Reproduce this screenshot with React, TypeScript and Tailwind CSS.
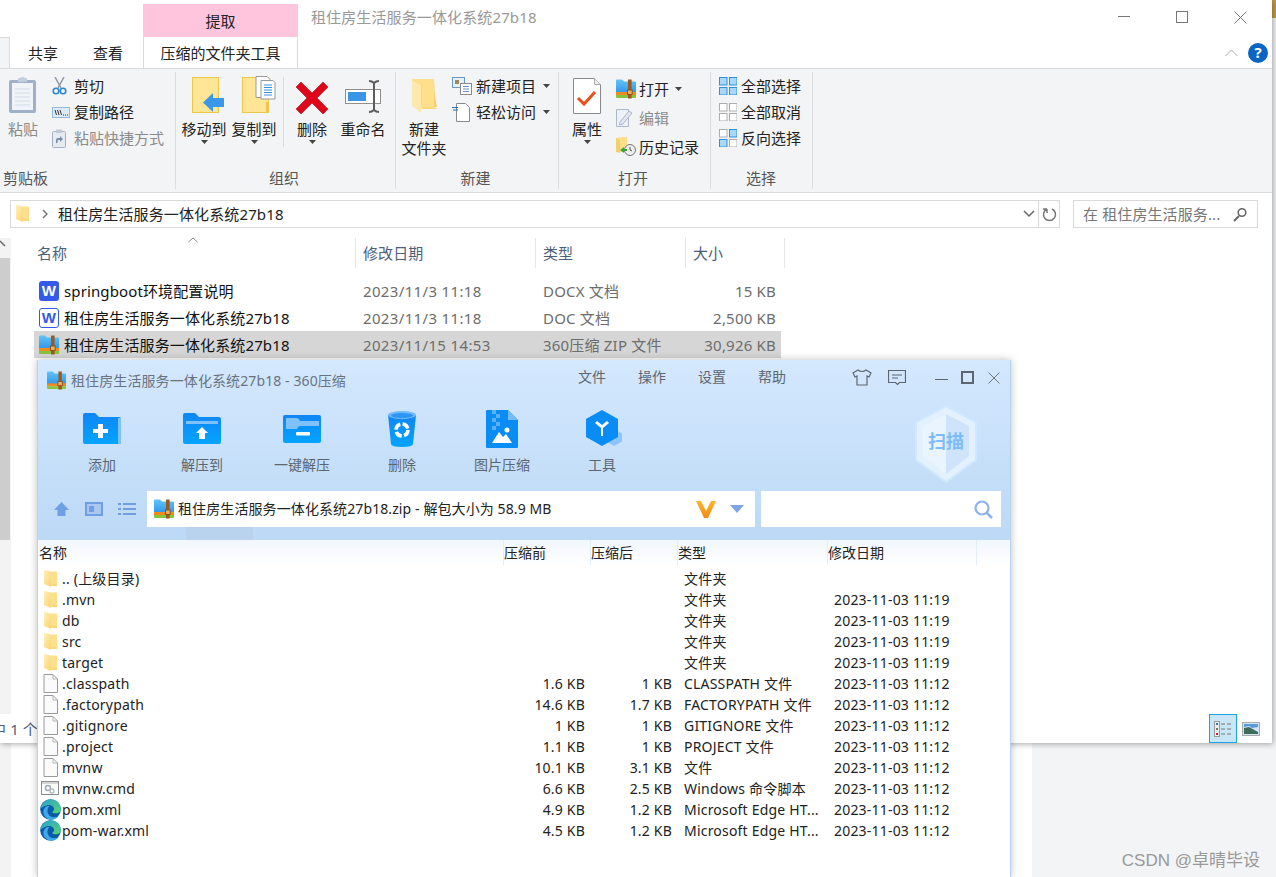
import type { ReactNode } from "react";

type Svg = { className?: string };

function Caret({ className = "" }: Svg) {
  return (
    <svg width="7" height="4" viewBox="0 0 7 4" className={className}>
      <path d="M0 0h7L3.500 4z" fill="#444" />
    </svg>
  );
}

function SmallFolder({ className = "" }: Svg) {
  return (
    <svg width="13" height="18" viewBox="0 0 13 18" className={className}>
      <defs>
        <linearGradient id="smallFold" x1="0" y1="0" x2="1" y2="1">
          <stop offset="0" stopColor="#fff0bd" />
          <stop offset="1" stopColor="#f9d470" />
        </linearGradient>
      </defs>
      <path d="M5 1.500h8V15H5z" fill="#ffe08a" />
      <path d="M0 0l6 1v12l7 1.500V16H7l-7-2z" fill="url(#smallFold)" />
      <path d="M0 0l7 2v15l-7-3z" fill="url(#smallFold)" />
    </svg>
  );
}

function ZipIcon({ size = 20 }: { size?: number }) {
  return (
    <svg width={size} height={size} viewBox="0 0 20 20">
      <defs>
        <linearGradient id="zipBlue" x1="0" y1="0" x2="0" y2="1">
          <stop offset="0" stopColor="#62c4f7" />
          <stop offset="1" stopColor="#2f96ea" />
        </linearGradient>
      </defs>
      <path d="M0 1.500q0-1 1-1h5l2 2h11q1 0 1 1V14H0z" fill="url(#zipBlue)" />
      <rect x="0" y="13" width="20" height="3" fill="#f08a1d" />
      <path d="M0 16h20v2q0 1-1 1H1q-1 0-1-1z" fill="#86c440" />
      <rect x="12" y="0.500" width="3.600" height="19" fill="#9c5a22" />
      <rect x="11.500" y="11" width="4.600" height="4.500" fill="#e8b45a" stroke="#7a4416" strokeWidth="0.800" />
    </svg>
  );
}

function FileIcon() {
  return (
    <svg width="15" height="19" viewBox="0 0 15 19">
      <path d="M1 .5h9l4.500 4.500v13.500H1z" fill="#fbfbfb" stroke="#9a9a9a" />
      <path d="M10 .5v4.500h4.500" fill="none" stroke="#b5b5b5" />
    </svg>
  );
}

function CmdIcon() {
  return (
    <svg width="18" height="15" viewBox="0 0 18 15">
      <rect x=".5" y=".5" width="17" height="13" fill="#fff" stroke="#8d8d8d" />
      <rect x="1" y="1" width="16" height="2" fill="#d7d7d7" />
      <circle cx="7" cy="7" r="2.500" fill="none" stroke="#9fa9b5" strokeWidth="1.500" />
      <circle cx="11" cy="10" r="2" fill="none" stroke="#b3bcc7" strokeWidth="1.300" />
    </svg>
  );
}

function EdgeIcon() {
  return (
    <svg width="21" height="21" viewBox="0 0 21 21">
      <defs>
        <linearGradient id="edgeTop" x1="0" y1="0" x2="1" y2="1">
          <stop offset="0" stopColor="#2a9fd8" />
          <stop offset="1" stopColor="#52d66e" />
        </linearGradient>
      </defs>
      <circle cx="10.500" cy="10.500" r="10.300" fill="#0b5aa8" />
      <path d="M.4 9.500C1.500 4 5.500.2 10.500.2c6 0 10.300 4.500 10.300 9.800 0 3-2.500 4.300-5 4.300-1.500 0-3.300-.5-3.800-1.300 1.500-.8 2.300-2 2-3.500C13.500 7 11 5.500 8 6 4 6.700 1.800 9 .4 9.500z" fill="url(#edgeTop)" />
      <path d="M8 7C5 7.500 3 10.500 3.500 14c.4 3 3 6 7 6.700 3.500.3 6.500-1.200 8-3.700-2 1.300-5 1.500-7.500.7C8.500 16.500 7 13.500 7.500 11 7.800 9.300 8.500 8 9.500 7z" fill="#3da9e8" />
    </svg>
  );
}

function WordIcon({ filled }: { filled: boolean }) {
  return (
    <div
      className={
        filled
          ? "flex h-5 w-5 items-center justify-center rounded-[3px] bg-[#3559e8] font-['Liberation_Sans',sans-serif] text-[15px] leading-none font-bold text-white"
          : "flex h-5 w-5 items-center justify-center rounded-[3px] border border-[#3559e8] bg-white font-['Liberation_Sans',sans-serif] text-[15px] leading-none font-bold text-[#3559e8]"
      }
    >
      W
    </div>
  );
}

function Paste() {
  return (
    <svg width="30" height="38" viewBox="0 0 30 38">
      <rect x="1" y="4" width="27" height="33" rx="2" fill="#9fb0c9" />
      <rect x="4" y="7" width="21" height="27" fill="#f0f3f8" />
      <path d="M7 13h15M7 17h15M7 21h15M7 25h15M7 29h15" stroke="#d3dbe8" />
      <path d="M10 6V3q0-1 1-1h1q2-2 5 0h1q1 0 1 1v3z" fill="#c2cddd" />
    </svg>
  );
}

function ScissorsIcon() {
  return (
    <svg width="15" height="18" viewBox="0 0 15 18">
      <path d="M3 0l6 11M12 0L6 11" stroke="#8e98a5" strokeWidth="1.500" fill="none" />
      <circle cx="4" cy="14" r="2.800" fill="none" stroke="#2a86d6" strokeWidth="1.600" />
      <circle cx="11" cy="14" r="2.800" fill="none" stroke="#2a86d6" strokeWidth="1.600" />
    </svg>
  );
}

function PathIcon() {
  return (
    <svg width="18" height="11" viewBox="0 0 18 11">
      <rect x=".5" y=".5" width="17" height="10" fill="#dceafa" stroke="#93bbe0" />
      <path d="M3 3l1.500 5M5.500 3L7 8M8 3l1.500 5" stroke="#333" fill="none" />
      <path d="M11 8h1M13 8h1M15 8h1" stroke="#333" />
    </svg>
  );
}

function ShortcutIcon() {
  return (
    <svg width="15" height="19" viewBox="0 0 15 19">
      <rect x=".5" y="2.500" width="13" height="16" rx="1" fill="#e6ebf2" stroke="#a5b0c2" />
      <rect x="4" y=".5" width="6" height="3.500" fill="#c0cad8" />
      <path d="M4 14v-3q0-2 2-2h2V7l3 3-3 3v-2H6.500q-1 0-1 1v2z" fill="#7b8da6" />
    </svg>
  );
}

function MoveTo() {
  return (
    <svg width="34" height="37" viewBox="0 0 34 37">
      <rect x=".5" y=".5" width="26" height="35" fill="#ffe596" stroke="#eec64e" />
      <path d="M12 28.500L22 19v5h11v9H22v5z" transform="translate(-1 -3)" fill="#3b97e8" />
    </svg>
  );
}

function CopyTo() {
  return (
    <svg width="34" height="38" viewBox="0 0 34 38">
      <rect x=".5" y="1.500" width="26" height="35" fill="#ffe596" stroke="#eec64e" />
      <rect x="24" y="26" width="2.500" height="10" fill="#eec64e" />
      <path d="M14 .5h11l6 6v15H14z" fill="#fff" stroke="#9a9a9a" />
      <path d="M19 4.500h12l2 2v16.500H19z" fill="#fff" stroke="#9a9a9a" />
      <path d="M22 9h8M22 11.500h8M22 14h8M22 16.500h8M22 19h8" stroke="#3b8fe0" />
    </svg>
  );
}

function DeleteX() {
  return (
    <svg width="32" height="32" viewBox="0 0 32 32">
      <path d="M5 0l11 11L27 0l5 5-11 11 11 11-5 5-11-11L5 32l-5-5 11-11L0 5z" fill="#e0061a" stroke="#a50c18" strokeWidth=".6" />
    </svg>
  );
}

function RenameIcon() {
  return (
    <svg width="36" height="34" viewBox="0 0 36 34">
      <rect x=".5" y="9.500" width="35" height="14" fill="#fff" stroke="#8f8f8f" />
      <rect x="3" y="12" width="18" height="9" fill="#3b95e6" />
      <path d="M24 1q3 0 5 2 2-2 5-2M24 32q3 0 5-2 2 2 5 2M29 3v27" fill="none" stroke="#5d5d5d" strokeWidth="2" />
    </svg>
  );
}

function NewFolder() {
  return (
    <svg width="25" height="35" viewBox="0 0 25 35">
      <path d="M0 0h22v28H6z" fill="#ffe08a" />
      <path d="M22 0v28h3l-2-10z" fill="#f6cf6a" />
      <path d="M0 0l10 6v24H25l-3-2H6l-6-3z" fill="#fbd978" />
      <path d="M0 1l9 5v28l-9-7z" fill="#fde8ae" />
    </svg>
  );
}

function NewItem() {
  return (
    <svg width="20" height="18" viewBox="0 0 20 18">
      <rect x=".5" y=".5" width="12" height="10" fill="#e6f0fb" stroke="#6d97c4" />
      <rect x="3" y="3" width="4" height="4" fill="#9c8b5a" />
      <rect x="8.500" y="6.500" width="11" height="11" fill="#fff" stroke="#8b8b8b" />
      <path d="M11 9.500h6M11 12h6M11 14.500h6" stroke="#6d97c4" />
    </svg>
  );
}

function EasyAccess() {
  return (
    <svg width="18" height="19" viewBox="0 0 18 19">
      <path d="M4.500 .5h9l4 4v14h-13z" fill="#fff" stroke="#8b8b8b" />
      <path d="M0 4.500h6M1 7h5" stroke="#1f6fc0" strokeWidth="1.200" />
    </svg>
  );
}

function Properties() {
  return (
    <svg width="28" height="36" viewBox="0 0 28 36">
      <path d="M.5.500h21l6 6v29H.5z" fill="#fff" stroke="#8a8a8a" />
      <path d="M21.500.5v6h6" fill="#eee" stroke="#aaa" />
      <path d="M5 20l6 6L22 14" fill="none" stroke="#e8511c" strokeWidth="3" />
    </svg>
  );
}

function EditIcon() {
  return (
    <svg width="17" height="18" viewBox="0 0 17 18">
      <path d="M.5.500h12v17H.5z" fill="#eef2f8" stroke="#aab8cd" />
      <path d="M4 13L13 2l3 2-9 11-3.500 1z" fill="#dfe6f0" stroke="#aab8cd" />
    </svg>
  );
}

function HistoryIcon() {
  return (
    <svg width="20" height="19" viewBox="0 0 20 19">
      <path d="M0 1l6-1h5v15H0z" fill="#ffe08a" />
      <path d="M0 1l4 2v13l-4-1z" fill="#f5cf6b" />
      <circle cx="14" cy="13" r="5.500" fill="#eee" stroke="#777" />
      <path d="M14 10v3l2 1" stroke="#555" fill="none" />
      <path d="M4 13l4-3v2h3v2H8v2z" fill="#3aa53a" />
    </svg>
  );
}

function GridIcon({ on }: { on: boolean[] }) {
  const cells = [
    [0, 0],
    [10, 0],
    [0, 10],
    [10, 10],
  ];
  return (
    <svg width="18" height="18" viewBox="0 0 18 18">
      {cells.map(([x, y], i) => (
        <rect
          key={i}
          x={x + 0.5}
          y={y + 0.5}
          width="7.500"
          height="7.500"
          fill={on[i] ? "#a9d8fb" : "#fff"}
          stroke={on[i] ? "#2f8fe0" : "#adadad"}
        />
      ))}
    </svg>
  );
}

function Big360Folder({ mode }: { mode: "add" | "up" | "minus" }) {
  return (
    <svg width="40" height="34" viewBox="0 0 40 34">
      <defs>
        <linearGradient id="blue360" x1="0" y1="0" x2="0" y2="1">
          <stop offset="0" stopColor="#0f86f5" />
          <stop offset="1" stopColor="#04a4ff" />
        </linearGradient>
      </defs>
      {mode === "minus" ? (
        <>
          <rect x="1" y="3" width="38" height="28" rx="2" fill="url(#blue360)" />
          <path d="M4 6h10q3 0 4 3h19v5H18q-2 0-3 3H4z" fill="#7fc1fb" />
          <rect x="14" y="20" width="14" height="3.500" rx="1" fill="#fff" />
        </>
      ) : (
        <>
          <path d="M1 3q0-2 2-2h10l4 4h20q2 0 2 2v23q0 2-2 2H3q-2 0-2-2z" fill="url(#blue360)" />
          {mode === "add" ? (
            <>
              <path d="M36 6h3v24q0 2-2 2h-1z" fill="#7fc1fb" />
              <path d="M16 12h5v5h5v4h-5v5h-5v-5h-5v-4h5z" fill="#fff" />
            </>
          ) : (
            <>
              <rect x="4" y="9" width="32" height="3" fill="#7fc1fb" />
              <path d="M20 15l6 6h-3v6h-6v-6h-3z" fill="#fff" />
            </>
          )}
        </>
      )}
    </svg>
  );
}

function BinIcon() {
  return (
    <svg width="32" height="38" viewBox="0 0 32 38">
      <defs>
        <linearGradient id="binBlue" x1="0" y1="0" x2="0" y2="1">
          <stop offset="0" stopColor="#0f86f5" />
          <stop offset="1" stopColor="#04a4ff" />
        </linearGradient>
      </defs>
      <path d="M2 5h28l-3 29q-.3 3-11 3T5 34z" fill="url(#binBlue)" />
      <ellipse cx="16" cy="5" rx="14" ry="4" fill="#6fbafb" />
      <ellipse cx="16" cy="5.500" rx="11" ry="2.500" fill="#2f95f3" />
      <circle cx="16" cy="20" r="6" fill="none" stroke="#fff" strokeWidth="3.500" strokeDasharray="7 2.400" />
    </svg>
  );
}

function ImageZipIcon() {
  return (
    <svg width="32" height="38" viewBox="0 0 32 38">
      <path d="M0 1q0-1 1-1h21l10 10v27q0 1-1 1H1q-1 0-1-1z" fill="#0a8cf5" />
      <path d="M22 0l10 10H22z" fill="#75bafa" />
      <path d="M6 0h4v4H6zM10 4h4v4h-4zM6 8h4v4H6zM10 12h4v4h-4zM6 16h4v4H6z" fill="#5dafF8" />
      <path d="M6 33l7-11 4 5 3-3 6 9z" fill="#fff" />
      <circle cx="21" cy="20" r="2.500" fill="#fff" />
    </svg>
  );
}

function ToolIcon() {
  return (
    <svg width="38" height="38" viewBox="0 0 38 38">
      <path d="M28 19l8 4.500v8L28 36l-8-4.500v-8z" fill="#8cc4fb" />
      <path d="M16 0l16 9v18l-16 9L0 27V9z" fill="#0a8cf5" />
      <path d="M15 26v-8l-6-5 2-2 5 4 5-4 2 2-6 5v8z" fill="#fff" />
    </svg>
  );
}

function Shield() {
  return (
    <div className="relative mt-[5px] mr-[32px] flex h-[78px] w-[64px] items-center justify-center">
      <svg width="64" height="78" viewBox="0 0 64 78" className="absolute inset-0">
        <path d="M32 1l30 16v38L32 77 2 55V17z" fill="#e3f1fe" stroke="#cfe8fd" strokeWidth="2" />
        <path d="M32 9l23 12v30L32 69z" fill="#cfe4fb" />
        <path d="M32 9L9 21v30l23 18z" fill="#eaf4fe" />
      </svg>
      <span className="relative -mt-[6px] text-[18px] leading-none font-bold text-[#7cbcf8]">扫描</span>
    </div>
  );
}

const Big = ({ icon, label, caret, width = "w-[50px]", iconClass = "" }: { icon: ReactNode; label: ReactNode; caret?: boolean; width?: string; iconClass?: string }) => (
  <div className={`flex ${width} flex-col items-center`}>
    <div className={`flex h-[42px] items-end justify-center ${iconClass}`}>{icon}</div>
    <div className="mt-[6px] text-center text-[15px] leading-[19px] whitespace-nowrap">{label}</div>
    {caret && <Caret className="mt-px" />}
  </div>
);

const Small = ({ icon, label, muted, caret, className = "h-[26px]" }: { icon: ReactNode; label: string; muted?: boolean; caret?: boolean; className?: string }) => (
  <div className={`flex items-center ${className}`}>
    <div className="flex w-[22px] justify-start">{icon}</div>
    <span className={muted ? "text-[15px] leading-5 whitespace-nowrap text-[#8a8a8a]" : "text-[15px] leading-5 whitespace-nowrap"}>{label}</span>
    {caret && <Caret className="ml-[5px]" />}
  </div>
);

const Group = ({ width, label, labelClass = "pr-[3px] text-center", children }: { width: string; label: string; labelClass?: string; children: ReactNode }) => (
  <div className={`${width} flex h-full shrink-0 flex-col border-r border-[#dcdddf]`}>
    <div className="flex h-[97px] items-start">{children}</div>
    <div className={`h-[21px] text-[15px] leading-[21px] text-[#555] ${labelClass}`}>{label}</div>
  </div>
);

const explorerFiles = [
  { icon: <WordIcon filled />, name: "springboot环境配置说明", date: "2023/11/3 11:18", type: "DOCX 文档", size: "15 KB" },
  { icon: <WordIcon filled={false} />, name: "租住房生活服务一体化系统27b18", date: "2023/11/3 11:18", type: "DOC 文档", size: "2,500 KB" },
  { icon: <ZipIcon />, name: "租住房生活服务一体化系统27b18", date: "2023/11/15 14:53", type: "360压缩 ZIP 文件", size: "30,926 KB", selected: true },
];

const zipRows: { kind: "folder" | "file" | "cmd" | "edge"; name: string; before?: string; after?: string; type: string; date?: string }[] = [
  { kind: "folder", name: ".. (上级目录)", type: "文件夹" },
  { kind: "folder", name: ".mvn", type: "文件夹", date: "2023-11-03 11:19" },
  { kind: "folder", name: "db", type: "文件夹", date: "2023-11-03 11:19" },
  { kind: "folder", name: "src", type: "文件夹", date: "2023-11-03 11:19" },
  { kind: "folder", name: "target", type: "文件夹", date: "2023-11-03 11:19" },
  { kind: "file", name: ".classpath", before: "1.6 KB", after: "1 KB", type: "CLASSPATH 文件", date: "2023-11-03 11:12" },
  { kind: "file", name: ".factorypath", before: "14.6 KB", after: "1.7 KB", type: "FACTORYPATH 文件", date: "2023-11-03 11:12" },
  { kind: "file", name: ".gitignore", before: "1 KB", after: "1 KB", type: "GITIGNORE 文件", date: "2023-11-03 11:12" },
  { kind: "file", name: ".project", before: "1.1 KB", after: "1 KB", type: "PROJECT 文件", date: "2023-11-03 11:12" },
  { kind: "file", name: "mvnw", before: "10.1 KB", after: "3.1 KB", type: "文件", date: "2023-11-03 11:12" },
  { kind: "cmd", name: "mvnw.cmd", before: "6.6 KB", after: "2.5 KB", type: "Windows 命令脚本", date: "2023-11-03 11:12" },
  { kind: "edge", name: "pom.xml", before: "4.9 KB", after: "1.2 KB", type: "Microsoft Edge HT...", date: "2023-11-03 11:12" },
  { kind: "edge", name: "pom-war.xml", before: "4.5 KB", after: "1.2 KB", type: "Microsoft Edge HT...", date: "2023-11-03 11:12" },
];

function zipRowIcon(kind: string) {
  if (kind === "folder") return <SmallFolder />;
  if (kind === "file") return <FileIcon />;
  if (kind === "cmd") return <CmdIcon />;
  return <EdgeIcon />;
}

function Explorer() {
  return (
    <div className="absolute top-0 left-0 flex h-[743px] w-[1272px] flex-col bg-white tracking-[0.12px] text-[#222] shadow-[1px_1px_6px_rgba(0,0,0,0.35)]">
      <div className="flex h-[37px] shrink-0 items-start">
        <div className="mt-1 ml-[143px] flex h-[33px] w-[155px] items-center justify-center bg-[#ffc5dd] text-[15px] leading-5">提取</div>
        <div className="mt-[7px] ml-[13px] text-[15px] leading-5 text-[#999]">租住房生活服务一体化系统27b18</div>
        <div className="ml-auto flex pt-[7px] pr-[3px]">
          <div className="flex h-5 w-[58px] items-center justify-center">
            <div className="mt-[-2px] h-px w-3 bg-[#777]" />
          </div>
          <div className="flex h-5 w-[58px] items-center justify-center">
            <div className="h-3 w-3 border border-[#777]" />
          </div>
          <div className="flex h-5 w-[58px] items-center justify-center">
            <svg width="13" height="13" viewBox="0 0 13 13">
              <path d="M.5.500l12 12M12.500.500l-12 12" stroke="#777" />
            </svg>
          </div>
        </div>
      </div>

      <div className="flex h-[32px] shrink-0 items-stretch border-b border-[#dadbdc] text-[15px] tracking-normal">
        <div className="w-[10px] border-t border-r border-[#dadbdc] bg-[#f3f4f6]" />
        <span className="ml-[18px] w-[65px] pt-[6px] leading-5">共享</span>
        <span className="w-[50px] pt-[6px] leading-5">查看</span>
        <span className="flex w-[155px] justify-center border-x border-[#dadbdc] pt-[6px] leading-5">压缩的文件夹工具</span>
        <div className="ml-auto flex items-center gap-[10px] pr-[4px]">
          <svg width="13" height="8" viewBox="0 0 13 8">
            <path d="M.5 7l6-6 6 6" fill="none" stroke="#aaa" />
          </svg>
          <div className="flex h-5 w-5 items-center justify-center rounded-full bg-[#0a66c2] text-[15px] leading-none font-bold text-white">?</div>
        </div>
      </div>

      <div className="flex h-[124px] shrink-0 items-stretch border-b border-[#dadbdc] bg-[#f3f4f6] pt-[3px] pb-[3px] tracking-normal">
        <Group width="w-[176px]" label="剪贴板" labelClass="pl-[3px] text-left">
          <div className="ml-[7px] w-[35px]">
            <Big width="w-[32px]" icon={<Paste />} label={<span className="text-[#8a8a8a]">粘贴</span>} />
          </div>
          <div className="mt-[1px] ml-[10px]">
            <Small icon={<ScissorsIcon />} label="剪切" />
            <Small icon={<PathIcon />} label="复制路径" />
            <Small icon={<ShortcutIcon />} label="粘贴快捷方式" muted />
          </div>
        </Group>
        <Group width="w-[220px]" label="组织">
          <div className="ml-[3px]">
            <Big icon={<MoveTo />} label="移动到" caret iconClass="pl-[9px]" />
          </div>
          <Big icon={<CopyTo />} label="复制到" caret iconClass="pl-[9px]" />
          <div className="mt-[5px] ml-[4px] h-[70px] w-px bg-[#dcdddf]" />
          <div className="ml-[2px]">
            <Big width="w-[52px]" icon={<DeleteX />} label="删除" caret />
          </div>
          <Big icon={<RenameIcon />} label="重命名" />
        </Group>
        <Group width="w-[163px]" label="新建">
          <div className="ml-[3px]">
            <Big icon={<NewFolder />} label={<>新建<br />文件夹</>} />
          </div>
          <div className="mt-[1px] ml-[3px]">
            <Small icon={<NewItem />} label="新建项目" caret className="h-[26px] gap-[2px]" />
            <Small icon={<EasyAccess />} label="轻松访问" caret className="h-[26px] gap-[2px]" />
          </div>
        </Group>
        <Group width="w-[152px]" label="打开">
          <div className="ml-[3px]">
            <Big icon={<Properties />} label="属性" caret />
          </div>
          <div className="mt-[2px] ml-[4px]">
            <Small icon={<ZipIcon size={20} />} label="打开" caret className="h-[29px] gap-[1px]" />
            <Small icon={<EditIcon />} label="编辑" muted className="h-[29px] gap-[1px]" />
            <Small icon={<HistoryIcon />} label="历史记录" className="h-[29px] gap-[1px]" />
          </div>
        </Group>
        <Group width="w-[102px]" label="选择" labelClass="pr-[1px] text-center">
          <div className="mt-[1px] ml-[8px]">
            <Small icon={<GridIcon on={[true, true, true, true]} />} label="全部选择" />
            <Small icon={<GridIcon on={[false, false, false, false]} />} label="全部取消" />
            <Small icon={<GridIcon on={[false, true, true, false]} />} label="反向选择" />
          </div>
        </Group>
      </div>

      <div className="flex h-[45px] shrink-0 items-start pt-[7px] pl-[10px]">
        <div className="flex h-[28px] w-[1050px] items-center border border-[#d9d9d9]">
          <SmallFolder className="ml-[5px]" />
          <svg width="6" height="10" viewBox="0 0 6 10" className="ml-[13px]">
            <path d="M1 1l4 4-4 4" fill="none" stroke="#777" strokeWidth="1.500" />
          </svg>
          <span className="-mt-px ml-[10px] text-[15px] leading-5">租住房生活服务一体化系统27b18</span>
          <svg width="12" height="8" viewBox="0 0 12 8" className="mr-[2px] ml-auto">
            <path d="M1 1l5 5 5-5" fill="none" stroke="#666" strokeWidth="1.500" />
          </svg>
          <div className="ml-[1px] flex h-full w-[21px] items-center justify-center border-l border-[#d9d9d9]">
            <svg width="15" height="15" viewBox="0 0 15 15">
              <path d="M5 2a6 6 0 1 0 5 0M5 2V6M5 2H1" fill="none" stroke="#777" strokeWidth="1.500" />
            </svg>
          </div>
        </div>
        <div className="ml-[13px] flex h-[28px] w-[185px] items-center border border-[#d9d9d9] pl-[9px]">
          <span className="text-[15px] leading-5 text-[#777]">在 租住房生活服务...</span>
          <svg width="14" height="15" viewBox="0 0 14 15" className="mr-[10px] ml-auto">
            <circle cx="9" cy="5.500" r="3.800" fill="none" stroke="#666" strokeWidth="1.600" />
            <path d="M6 9l-5 5" stroke="#666" strokeWidth="2" />
          </svg>
        </div>
      </div>

      <div className="flex min-h-0 flex-1">
        <div className="flex w-[11px] shrink-0 flex-col bg-[#f3f3f3]">
          <svg width="10" height="20" viewBox="0 0 10 20">
            <path d="M0 3l5 5" stroke="#666" strokeWidth="1.500" />
          </svg>
          <div className="h-[282px] w-[10px] bg-[#cdcdcd]" />
        </div>
        <div className="flex-1 pl-[26px]">
          <div className="flex h-[30px] items-stretch text-[15px] leading-[30px] text-[#4c607a]">
            <div className="relative w-[318px]">
              名称
              <svg width="10" height="6" viewBox="0 0 10 6" className="absolute top-[-1px] left-[151px]">
                <path d="M.5 5L5 1l4.500 4" fill="none" stroke="#888" />
              </svg>
            </div>
            <div className="w-[180px] border-l border-[#e5e5e5] pl-[7px]">修改日期</div>
            <div className="w-[150px] border-l border-[#e5e5e5] pl-[7px]">类型</div>
            <div className="w-[100px] border-x border-[#e5e5e5] pl-[7px]">大小</div>
          </div>
          <div className="mt-[9px] -ml-[3px] w-[747px]">
            {explorerFiles.map((f) => (
              <div key={f.date + f.size} className={f.selected ? "flex h-[27px] items-center bg-[#d6d6d6]" : "flex h-[27px] items-center"}>
                <div className="ml-[5px] flex w-[25px]">{f.icon}</div>
                <div className="w-[299px] text-[15px] leading-5 whitespace-nowrap text-[#111]">{f.name}</div>
                <div className="w-[180px] text-[15px] leading-5 tracking-[0.35px] text-[#6d6d6d]">{f.date}</div>
                <div className="w-[130px] text-[15px] leading-5 tracking-[0.2px] whitespace-nowrap text-[#6d6d6d]">{f.type}</div>
                <div className="w-[103px] text-right text-[15px] leading-5 tracking-[0.2px] text-[#6d6d6d]">{f.size}</div>
              </div>
            ))}
          </div>
        </div>
      </div>

      <div className="flex h-[29px] shrink-0 items-center overflow-hidden">
        <span className="-ml-[9px] text-[15px] leading-5 whitespace-nowrap text-[#4c607a]">中 1 个</span>
        <div className="ml-auto flex items-center pr-[12px]">
          <div className="flex h-[29px] w-[28px] items-center justify-center border border-[#1ea3e6] bg-[#c9e6f7]">
            <svg width="18" height="16" viewBox="0 0 18 16">
              <rect x=".5" y=".5" width="5" height="15" fill="#eee" stroke="#999" />
              <rect x="2" y="2" width="2" height="2" fill="#3b6f9e" />
              <rect x="2" y="7" width="2" height="2" fill="#6d7b52" />
              <rect x="2" y="12" width="2" height="2" fill="#c22" />
              <path d="M7 3h4M13 3h4M7 8h4M13 8h4M7 13h4M13 13h4" stroke="#777" />
            </svg>
          </div>
          <svg width="18" height="14" viewBox="0 0 18 14" className="ml-[5px]">
            <rect x=".5" y=".5" width="17" height="13" fill="#cfe6f8" stroke="#aaa" />
            <path d="M2 6l5-1 9 5v2H2z" fill="#3f6b5a" />
            <path d="M2 2h14v3l-6 1-3-2-5 1z" fill="#5a9ad8" />
          </svg>
        </div>
      </div>
    </div>
  );
}

function ZipWindow() {
  const tools = [
    { icon: <Big360Folder mode="add" />, label: "添加" },
    { icon: <Big360Folder mode="up" />, label: "解压到" },
    { icon: <Big360Folder mode="minus" />, label: "一键解压" },
    { icon: <BinIcon />, label: "删除" },
    { icon: <ImageZipIcon />, label: "图片压缩" },
    { icon: <ToolIcon />, label: "工具", shift: "pl-[6px]" },
  ];
  return (
    <div className="absolute top-[360px] left-[37px] flex h-[517px] w-[974px] flex-col border-x border-[#b7d3ef] bg-white shadow-[0_0_8px_rgba(0,0,0,0.25)]">
      <div className="h-[180px] shrink-0 bg-linear-to-b from-[#d4e8fe] to-[#bcd9f6]">
        <div className="flex h-[40px] items-start">
          <div className="mt-[11px] ml-[9px]">
            <ZipIcon size={19} />
          </div>
          <span className="mt-[11px] ml-[5px] text-[14px] leading-5 tracking-[0.1px] text-[#6a7380]">租住房生活服务一体化系统27b18 - 360压缩</span>
          <div className="mt-[7px] ml-[232px] flex gap-[32px] text-[14px] leading-5 text-[#5d6670]">
            <span>文件</span>
            <span>操作</span>
            <span>设置</span>
            <span>帮助</span>
          </div>
          <div className="mt-[9px] ml-[66px] flex items-center">
            <svg width="20" height="17" viewBox="0 0 20 17">
              <path d="M6 1L1 4l2 4 2-1v9h10V7l2 1 2-4-5-3q-4 3-8 0z" fill="none" stroke="#5d6670" strokeWidth="1.200" />
            </svg>
            <svg width="18" height="16" viewBox="0 0 18 16" className="ml-[16px]">
              <path d="M.5.500h17v12h-6l-2 2-2-2h-7z" fill="none" stroke="#5d6670" strokeWidth="1.200" />
              <path d="M4 5h10M4 8h6" stroke="#5d6670" />
            </svg>
            <div className="mt-[3px] ml-[29px] h-px w-[13px] bg-[#5d6670]" />
            <div className="ml-[13px] h-[13px] w-[13px] border-2 border-[#5d6670]" />
            <svg width="12" height="12" viewBox="0 0 12 12" className="ml-[14px]">
              <path d="M.5.500l11 11M11.500.500l-11 11" stroke="#6d7680" />
            </svg>
          </div>
        </div>
        <div className="flex h-[91px] items-start pl-[14px]">
          {tools.map((t) => (
            <div key={t.label} className="flex w-[100px] flex-col items-center">
              <div className={`mt-[8px] flex h-[42px] items-center justify-center ${t.shift ?? ""}`}>{t.icon}</div>
              <span className="mt-[5px] text-[14px] leading-5 text-[#5d6670]">{t.label}</span>
            </div>
          ))}
          <div className="ml-auto">
            <Shield />
          </div>
        </div>
        <div className="flex h-[36px] items-center">
          <div className="flex w-[109px] items-center pl-[15px]">
            <svg width="17" height="16" viewBox="0 0 17 16">
              <path d="M8.500 1L16 9h-3.500v6h-8V9H1z" fill="#6f9fe3" />
            </svg>
            <svg width="18" height="14" viewBox="0 0 18 14" className="ml-[15px]">
              <rect x="1" y="1" width="16" height="12" fill="#a9c8ef" stroke="#6f9fe3" strokeWidth="2" />
              <rect x="4" y="4" width="5" height="6" fill="#6f9fe3" />
            </svg>
            <svg width="18" height="12" viewBox="0 0 18 12" className="ml-[15px]">
              <path d="M0 1h3M5 1h13M0 6h3M5 6h13M0 11h3M5 11h13" stroke="#6f9fe3" strokeWidth="2" />
            </svg>
          </div>
          <div className="flex h-[36px] w-[608px] items-center bg-white pl-[7px]">
            <ZipIcon size={20} />
            <span className="ml-[4px] text-[14px] leading-5 tracking-[0.1px] text-[#222]">租住房生活服务一体化系统27b18.zip - 解包大小为 58.9 MB</span>
            <svg width="20" height="19" viewBox="0 0 20 19" className="ml-auto">
              <defs>
                <linearGradient id="vGold" x1="0" y1="0" x2="0" y2="1">
                  <stop offset="0" stopColor="#ffb52e" />
                  <stop offset="1" stopColor="#f28a12" />
                </linearGradient>
              </defs>
              <path d="M0 1h5l5 10 5-10h5l-8 17H8z" fill="url(#vGold)" />
            </svg>
            <svg width="14" height="8" viewBox="0 0 14 8" className="mr-[11px] ml-[14px]">
              <path d="M0 0h14L7 8z" fill="#7ea6e6" />
            </svg>
          </div>
          <div className="ml-[6px] flex h-[36px] w-[240px] items-center justify-end bg-white pr-[8px]">
            <svg width="19" height="19" viewBox="0 0 19 19">
              <circle cx="8" cy="8" r="6.500" fill="none" stroke="#8cb4ea" strokeWidth="2.200" />
              <path d="M13 13l5 5" stroke="#8cb4ea" strokeWidth="2.500" />
            </svg>
          </div>
        </div>
        <div className="ml-[148px] h-[13px] w-[67px] bg-[#b9d3ee]" />
      </div>

      <div className="flex h-[25px] shrink-0 items-stretch bg-linear-to-b from-[#f1f7fe] to-white text-[14px] leading-[25px] text-[#222]">
        <div className="w-[465px] pl-px">名称</div>
        <div className="w-[87px] border-l border-[#e4eefa]">压缩前</div>
        <div className="w-[87px] border-l border-[#e4eefa]">压缩后</div>
        <div className="w-[150px] border-l border-[#e4eefa]">类型</div>
        <div className="w-[150px] border-x border-[#e4eefa]">修改日期</div>
      </div>

      <div className="pt-[3px] text-[14px] leading-[21px] tracking-[0.2px] text-[#222]">
        {zipRows.map((r) => (
          <div key={r.name} className="flex h-[21px] items-center">
            <div className="flex w-[24px] shrink-0 justify-center">{zipRowIcon(r.kind)}</div>
            <div className="w-[443px]">{r.name}</div>
            <div className="w-[80px] text-right">{r.before}</div>
            <div className="w-[87px] text-right">{r.after}</div>
            <div className="w-[162px] pl-[12px] whitespace-nowrap">{r.type}</div>
            <div>{r.date}</div>
          </div>
        ))}
      </div>
    </div>
  );
}

export default function App() {
  return (
    <div className="relative h-[877px] w-[1276px] overflow-hidden bg-white font-['Noto_Sans','Noto_Sans_CJK_SC',sans-serif]">
      <div className="absolute inset-0 flex">
        <div className="w-[11px] bg-[#f3f3f3]" />
        <div className="flex-1 bg-white" />
        <div className="w-[244px] bg-[#f3f4f6]">
          <div className="ml-auto h-[18px] w-[4px] bg-[#c49a4a]" />
        </div>
      </div>
      <Explorer />
      <ZipWindow />
      <div className="absolute right-[16px] bottom-[6px] font-['Liberation_Sans','Noto_Sans_CJK_SC',sans-serif] text-[17px] leading-5 text-[#999]">CSDN @卓晴毕设</div>
    </div>
  );
}
